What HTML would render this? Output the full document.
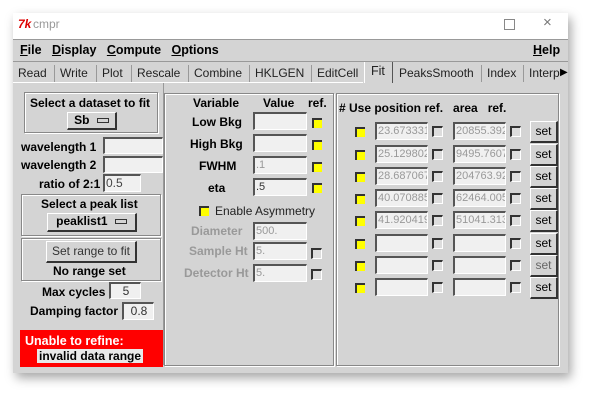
<!DOCTYPE html>
<html><head><style>
body{margin:0;width:600px;height:406px;background:#fff;position:relative;overflow:hidden;font-family:"Liberation Sans",sans-serif;}
.a{position:absolute;}
#win{left:13px;top:13px;width:555px;height:360px;background:#d4d4d4;box-shadow:3px 5px 10px rgba(0,0,0,.35);}
.b{font-weight:bold;font-size:12px;color:#000;white-space:nowrap;}
.n{font-size:12px;white-space:nowrap;}
.e{position:absolute;background:#f0f0f0;border-top:2px solid #555;border-left:2px solid #555;border-right:1px solid #fff;border-bottom:1px solid #fff;box-sizing:border-box;font-size:11px;color:#999;line-height:14px;padding-left:1px;overflow:hidden;white-space:nowrap;}
.y{position:absolute;width:10px;height:10px;background:#ff0;border-top:2px solid #333;border-left:2px solid #333;box-sizing:border-box;}
.c{position:absolute;width:11px;height:11px;background:#ddd;border-top:2px solid #333;border-left:2px solid #333;border-right:1px solid #fff;border-bottom:1px solid #fff;box-sizing:border-box;}
.grp{position:absolute;border:1px solid #888;box-shadow:inset 1px 1px 0 #fff,1px 1px 0 #fff;box-sizing:border-box;}
.btn{position:absolute;background:#d4d4d4;border-top:1px solid #fff;border-left:1px solid #fff;border-right:2px solid #333;border-bottom:2px solid #333;box-sizing:border-box;text-align:center;font-size:12px;}
.tab{position:absolute;top:66px;font-size:12px;color:#222;}
.sep{position:absolute;top:65px;width:1px;height:17px;background:#999;}
</style></head><body>
<div id="win" class="a"></div>
<div class="a" style="left:13px;top:13px;width:555px;height:26px;background:#fff;"></div>
<div class="a" style="left:18px;top:17px;font-size:12px;color:#d00;font-weight:bold;font-style:italic;">7k</div>
<div class="a" style="left:33px;top:17px;font-size:12px;color:#999;">cmpr</div>
<div class="a" style="left:504px;top:19px;width:9px;height:9px;border:1px solid #888;"></div>
<div class="a" style="left:543px;top:14px;font-size:15px;color:#777;">×</div>
<div class="a" style="left:13px;top:39px;width:555px;height:1px;background:#999;"></div>
<div class="a b" style="left:20px;top:43px;font-size:12.5px;"><u>F</u>ile &nbsp;&nbsp;<u>D</u>isplay &nbsp;&nbsp;<u>C</u>ompute &nbsp;&nbsp;<u>O</u>ptions</div>
<div class="a b" style="left:533px;top:43px;font-size:12.5px;"><u>H</u>elp</div>
<div class="a" style="left:13px;top:61px;width:555px;height:1px;background:#999;"></div>
<div class="tab" style="left:18px">Read</div><div class="sep" style="left:54px"></div>
<div class="tab" style="left:60px">Write</div><div class="sep" style="left:96px"></div>
<div class="tab" style="left:102px">Plot</div><div class="sep" style="left:131px"></div>
<div class="tab" style="left:137px">Rescale</div><div class="sep" style="left:188px"></div>
<div class="tab" style="left:194px">Combine</div><div class="sep" style="left:249px"></div>
<div class="tab" style="left:255px">HKLGEN</div><div class="sep" style="left:311px"></div>
<div class="tab" style="left:317px">EditCell</div>
<div class="a" style="left:364px;top:62px;width:27px;height:21px;background:#d4d4d4;border-left:1px solid #fff;border-right:1px solid #555;"></div>
<div class="tab" style="left:371px;top:64px;font-size:12.5px;">Fit</div>
<div class="tab" style="left:399px">PeaksSmooth</div><div class="sep" style="left:481px"></div>
<div class="tab" style="left:487px">Index</div><div class="sep" style="left:523px"></div>
<div class="tab" style="left:529px">Interp</div>
<div class="a" style="left:560px;top:67px;font-size:10px;">▶</div>
<div class="a" style="left:13px;top:82px;width:350px;height:1px;background:#fff;"></div>

<!-- left -->
<div class="grp" style="left:24px;top:92px;width:134px;height:41px;"></div>
<div class="a b" style="left:30px;top:96px;">Select a dataset to fit</div>
<div class="btn" style="left:67px;top:112px;width:50px;height:18px;font-weight:bold;">Sb <span style="display:inline-block;width:10px;height:3px;border:1px solid #333;vertical-align:middle;margin-left:4px;"></span></div>
<div class="a b" style="left:21px;top:140px;">wavelength 1</div><div class="e" style="left:103px;top:137px;width:60px;height:17px;"></div>
<div class="a b" style="left:21px;top:158px;">wavelength 2</div><div class="e" style="left:103px;top:156px;width:60px;height:17px;"></div>
<div class="a b" style="left:39px;top:177px;">ratio of 2:1</div><div class="e" style="left:103px;top:174px;width:38px;height:18px;color:#444;font-size:12px;">0.5</div>
<div class="grp" style="left:21px;top:194px;width:140px;height:42px;"></div>
<div class="a b" style="left:41px;top:197px;">Select a peak list</div>
<div class="btn" style="left:47px;top:213px;width:90px;height:19px;font-weight:bold;">peaklist1 <span style="display:inline-block;width:10px;height:3px;border:1px solid #333;vertical-align:middle;margin-left:4px;"></span></div>
<div class="grp" style="left:21px;top:238px;width:140px;height:43px;"></div>
<div class="btn" style="left:46px;top:241px;width:91px;height:22px;line-height:19px;color:#333;">Set range to fit</div>
<div class="a b" style="left:53px;top:264px;">No range set</div>
<div class="a b" style="left:42px;top:285px;">Max cycles</div><div class="e" style="left:109px;top:282px;width:32px;height:17px;color:#333;text-align:center;font-size:12px;">5</div>
<div class="a b" style="left:30px;top:304px;">Damping factor</div><div class="e" style="left:122px;top:302px;width:32px;height:18px;color:#333;text-align:center;font-size:12px;">0.8</div>
<div class="a" style="left:20px;top:330px;width:143px;height:37px;background:#f00;"></div>
<div class="a b" style="left:25px;top:334px;color:#fff;font-size:12.5px;">Unable to refine:</div>
<div class="a b" style="left:37px;top:349px;background:#e8e8e8;padding:0 2px;font-size:12px;">invalid data range</div>
<div class="a" style="left:163px;top:83px;width:1px;height:282px;background:#999;"></div>

<!-- middle -->
<div class="grp" style="left:164px;top:93px;width:170px;height:273px;"></div>
<div class="a b" style="left:193px;top:96px;">Variable</div>
<div class="a b" style="left:263px;top:96px;">Value</div>
<div class="a b" style="left:308px;top:96px;">ref.</div>
<div class="a b" style="left:192px;top:115px;">Low Bkg</div><div class="e" style="left:253px;top:112px;width:54px;height:18px;"></div><div class="y" style="left:312px;top:118px"></div>
<div class="a b" style="left:190px;top:137px;">High Bkg</div><div class="e" style="left:253px;top:134px;width:54px;height:18px;"></div><div class="y" style="left:312px;top:140px"></div>
<div class="a b" style="left:199px;top:159px;">FWHM</div><div class="e" style="left:253px;top:156px;width:54px;height:18px;">.1</div><div class="y" style="left:312px;top:162px"></div>
<div class="a b" style="left:208px;top:181px;">eta</div><div class="e" style="left:253px;top:178px;width:54px;height:18px;color:#333;">.5</div><div class="y" style="left:312px;top:183px"></div>
<div class="y" style="left:199px;top:206px"></div><div class="a n" style="left:215px;top:204px;color:#222;">Enable Asymmetry</div>
<div class="a b" style="left:191px;top:224px;color:#999;">Diameter</div><div class="e" style="left:253px;top:222px;width:54px;height:18px;">500.</div>
<div class="a b" style="left:189px;top:244px;color:#999;">Sample Ht</div><div class="e" style="left:253px;top:242px;width:54px;height:18px;">5.</div><div class="c" style="left:311px;top:248px"></div>
<div class="a b" style="left:184px;top:266px;color:#999;">Detector Ht</div><div class="e" style="left:253px;top:264px;width:54px;height:18px;">5.</div><div class="c" style="left:311px;top:269px"></div>

<!-- right -->
<div class="grp" style="left:336px;top:93px;width:223px;height:273px;"></div>
<div class="a b" style="left:339px;top:101px;"># Use position ref. &nbsp;&nbsp;area &nbsp;&nbsp;ref.</div>
<div class="y" style="left:355px;top:127px"></div><div class="e" style="left:375px;top:122px;width:53px;height:18px;">23.673331</div><div class="c" style="left:432px;top:126px"></div><div class="e" style="left:453px;top:122px;width:53px;height:18px;">20855.392</div><div class="c" style="left:510px;top:126px"></div><div class="btn" style="left:530px;top:121px;width:28px;height:22px;line-height:18px;">set</div>
<div class="y" style="left:355px;top:150px"></div><div class="e" style="left:375px;top:145px;width:53px;height:18px;">25.129802</div><div class="c" style="left:432px;top:149px"></div><div class="e" style="left:453px;top:145px;width:53px;height:18px;">9495.7607</div><div class="c" style="left:510px;top:149px"></div><div class="btn" style="left:530px;top:144px;width:28px;height:22px;line-height:18px;">set</div>
<div class="y" style="left:355px;top:172px"></div><div class="e" style="left:375px;top:167px;width:53px;height:18px;">28.687067</div><div class="c" style="left:432px;top:171px"></div><div class="e" style="left:453px;top:167px;width:53px;height:18px;">204763.92</div><div class="c" style="left:510px;top:171px"></div><div class="btn" style="left:530px;top:166px;width:28px;height:22px;line-height:18px;">set</div>
<div class="y" style="left:355px;top:194px"></div><div class="e" style="left:375px;top:189px;width:53px;height:18px;">40.070885</div><div class="c" style="left:432px;top:193px"></div><div class="e" style="left:453px;top:189px;width:53px;height:18px;">62464.005</div><div class="c" style="left:510px;top:193px"></div><div class="btn" style="left:530px;top:188px;width:28px;height:22px;line-height:18px;">set</div>
<div class="y" style="left:355px;top:216px"></div><div class="e" style="left:375px;top:211px;width:53px;height:18px;">41.920419</div><div class="c" style="left:432px;top:215px"></div><div class="e" style="left:453px;top:211px;width:53px;height:18px;">51041.313</div><div class="c" style="left:510px;top:215px"></div><div class="btn" style="left:530px;top:210px;width:28px;height:22px;line-height:18px;">set</div>
<div class="y" style="left:355px;top:239px"></div><div class="e" style="left:375px;top:234px;width:53px;height:18px;"></div><div class="c" style="left:432px;top:238px"></div><div class="e" style="left:453px;top:234px;width:53px;height:18px;"></div><div class="c" style="left:510px;top:238px"></div><div class="btn" style="left:530px;top:233px;width:28px;height:22px;line-height:18px;">set</div>
<div class="y" style="left:355px;top:261px"></div><div class="e" style="left:375px;top:256px;width:53px;height:18px;"></div><div class="c" style="left:432px;top:260px"></div><div class="e" style="left:453px;top:256px;width:53px;height:18px;"></div><div class="c" style="left:510px;top:260px"></div><div class="btn" style="left:530px;top:255px;width:28px;height:22px;line-height:18px;color:#666;">set</div>
<div class="y" style="left:355px;top:283px"></div><div class="e" style="left:375px;top:278px;width:53px;height:18px;"></div><div class="c" style="left:432px;top:282px"></div><div class="e" style="left:453px;top:278px;width:53px;height:18px;"></div><div class="c" style="left:510px;top:282px"></div><div class="btn" style="left:530px;top:277px;width:28px;height:22px;line-height:18px;">set</div>
</body></html>
